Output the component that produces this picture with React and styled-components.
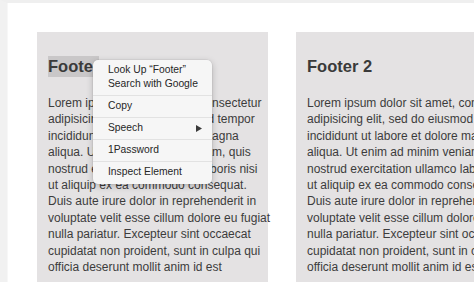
import React from 'react';
import styled, { createGlobalStyle } from 'styled-components';

const Global = createGlobalStyle`
  html, body {
    margin: 0;
    padding: 0;
    background: #ffffff;
    overflow: hidden;
  }
  body {
    font-family: "Liberation Sans", Arial, Helvetica, sans-serif;
  }
`;

const Page = styled.div`
  width: 474px;
  height: 282px;
  overflow: hidden;
  box-sizing: border-box;
  border-top: 3px solid #efefef;
  border-left: 7px solid #f1f1f1;
  background: #ffffff;
`;

const Inner = styled.div`
  display: flex;
  gap: 28px;
  padding: 29px 0 0 29px;
  border-left: 1px solid #f7f7f7;
`;

const Card = styled.section`
  position: relative;
  flex: 0 0 auto;
  width: 231px;
  height: 260px;
  box-sizing: border-box;
  padding: 24px 0 0 11px;
  background: #e4e2e3;
`;

const Heading = styled.h2`
  margin: 0 0 18px;
  font-size: 16.5px;
  line-height: 21px;
  font-weight: bold;
  color: #3a3a3a;
  white-space: nowrap;
`;

const Selected = styled.span`
  display: inline-block;
  background: #c9c7c8;
`;

const Body = styled.p`
  margin: 0;
  font-size: 12px;
  line-height: 16.4px;
  color: #3c3c3c;
  white-space: nowrap;
`;

const Menu = styled.div`
  position: absolute;
  left: 56px;
  top: 28px;
  width: 119px;
  box-sizing: border-box;
  padding: 1px 0 1px;
  background: #f6f6f6;
  border-radius: 5px;
  box-shadow: 0 2px 7px rgba(0, 0, 0, 0.22), 0 0 0 0.5px rgba(0, 0, 0, 0.08);
  font-size: 10.3px;
  color: #262626;
`;

const Group = styled.div`
  padding: ${p => (p.$first ? '2px' : '3.5px')} 0 3.5px;
  border-top: ${p => (p.$first ? 'none' : '1px solid #e2e2e2')};
`;

const Item = styled.div`
  display: flex;
  align-items: center;
  justify-content: space-between;
  height: 14px;
  line-height: 14px;
  padding: 0 10px 0 15px;
  white-space: nowrap;
`;

const Arrow = () => (
  <svg width="6" height="7" viewBox="0 0 6 7">
    <polygon points="0,0 6,3.5 0,7" fill="#3a3a3a" />
  </svg>
);

const lines = [
  'Lorem ipsum dolor sit amet, consectetur',
  'adipisicing elit, sed do eiusmod tempor',
  'incididunt ut labore et dolore magna',
  'aliqua. Ut enim ad minim veniam, quis',
  'nostrud exercitation ullamco laboris nisi',
  'ut aliquip ex ea commodo consequat.',
  'Duis aute irure dolor in reprehenderit in',
  'voluptate velit esse cillum dolore eu fugiat',
  'nulla pariatur. Excepteur sint occaecat',
  'cupidatat non proident, sunt in culpa qui',
  'officia deserunt mollit anim id est',
];

const Lorem = () => (
  <Body>
    {lines.map((l, i) => (
      <React.Fragment key={i}>
        {l}
        {i < lines.length - 1 && <br />}
      </React.Fragment>
    ))}
  </Body>
);

export default function App() {
  return (
    <>
      <Global />
      <Page>
        <Inner>
          <Card>
            <Heading>
              <Selected>Footer</Selected>
            </Heading>
            <Lorem />
            <Menu>
              <Group $first>
                <Item>Look Up “Footer”</Item>
                <Item>Search with Google</Item>
              </Group>
              <Group>
                <Item>Copy</Item>
              </Group>
              <Group>
                <Item>
                  Speech <Arrow />
                </Item>
              </Group>
              <Group>
                <Item>1Password</Item>
              </Group>
              <Group>
                <Item>Inspect Element</Item>
              </Group>
            </Menu>
          </Card>
          <Card>
            <Heading>Footer 2</Heading>
            <Lorem />
          </Card>
        </Inner>
      </Page>
    </>
  );
}
